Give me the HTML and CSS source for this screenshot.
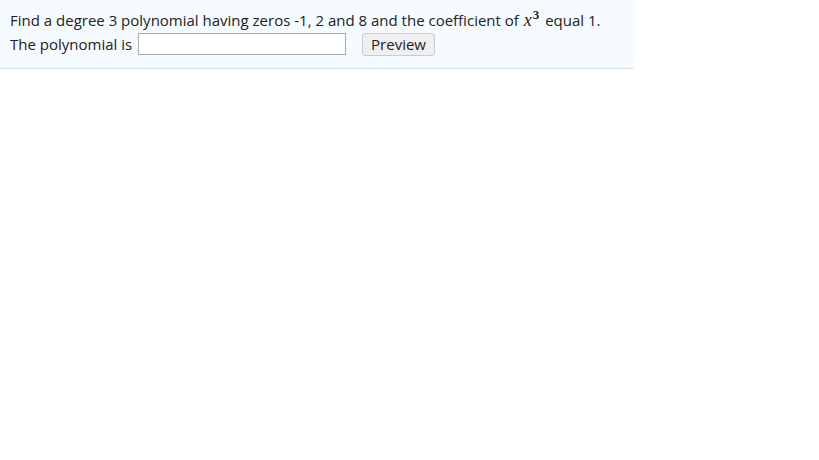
FILE: index.html
```html
<!DOCTYPE html>
<html>
<head>
<meta charset="utf-8">
<link rel="stylesheet" href="styles.css">
</head>
<body>
<div class="problem">
  <div class="line">Find a degree 3 polynomial having zeros -1, 2 and 8 and the coefficient of <span class="math"><span class="mi">x</span><sup class="sup">3</sup></span> equal 1.</div>
  <div class="line">The polynomial is <input class="answer" type="text"> <button class="preview">Preview</button></div>
</div>
</body>
</html>
```
FILE: styles.css
```css
body {
  margin: 0;
  background: #fff;
  font-family: "Open Sans", "DejaVu Sans", sans-serif;
  font-size: 15px;
  color: #222;
}
.problem {
  width: 614px;
  padding: 8px 10px 12px 10px;
  background: #f5fbfe;
  border-bottom: 1px solid #d3e2ec;
  box-shadow: 0 1px 1px #e3edf3;
}
.line {
  line-height: 24px;
  height: 24px;
  display: flex;
  align-items: center;
  white-space: pre;
}
.math {
  font-family: "Liberation Serif", "DejaVu Serif", serif;
  font-size: 18px;
  margin-left: 1px;
  margin-right: 2px;
}
.mi {
  font-style: italic;
}
.sup {
  font-size: 13px;
  font-weight: bold;
  vertical-align: 7px;
  line-height: 0;
  margin-left: 1px;
}
.answer {
  box-sizing: border-box;
  width: 208px;
  height: 22px;
  margin: 0 0 0 2px;
  padding: 1px 2px;
  border: 1px solid #aaa;
  background: #fff;
  font-family: "Open Sans", sans-serif;
  font-size: 15px;
}
.preview {
  box-sizing: border-box;
  margin-left: 16px;
  width: 73px;
  height: 23px;
  padding: 0;
  border: 1px solid #ccc;
  border-radius: 3px;
  background: #efefef;
  font-family: "Open Sans", sans-serif;
  font-size: 15px;
  color: #222;
}
```
